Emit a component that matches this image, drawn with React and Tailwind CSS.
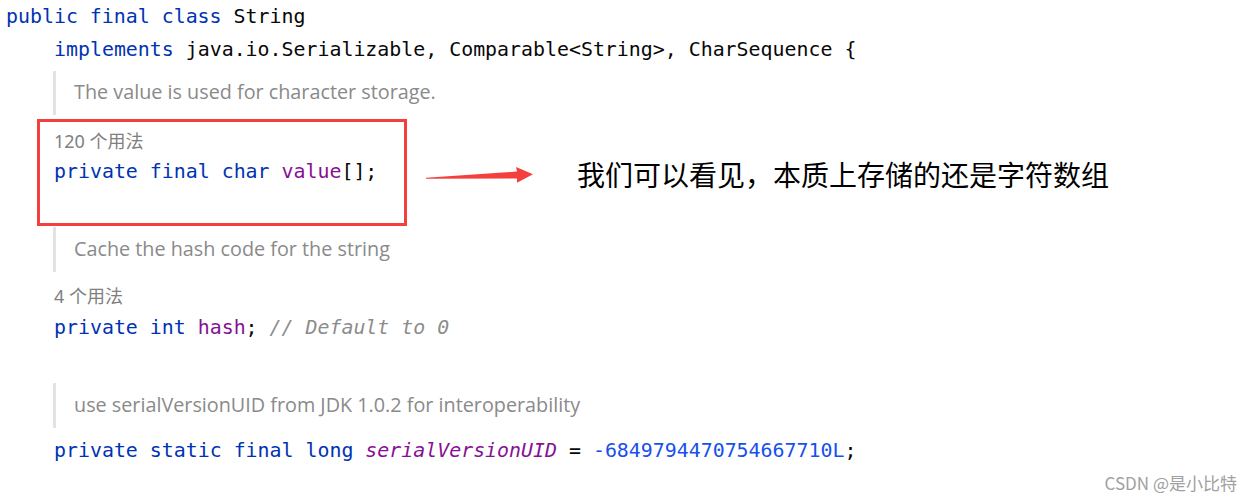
export default function App() {
    const kw = "text-[#0033b3]";
    const fld = "text-[#871094]";
    const txt = "text-[#080808]";

    return (
        <div className="relative w-[1251px] h-[502px] bg-white overflow-hidden font-['DejaVu_Sans_Mono',monospace] text-[19.9px] text-[#080808]">

            {/* CLASS HEADER */}
            <div className="h-[33px] leading-[33px] pl-[6px] whitespace-pre">
                <span className={kw}>public final class </span>
                <span className={txt}>String</span>
            </div>
            <div className="h-[33px] leading-[33px] pl-[54px] whitespace-pre">
                <span className={kw}>implements </span>
                <span className={txt}>java.io.Serializable, Comparable&lt;String&gt;, CharSequence {"{"}</span>
            </div>

            {/* DOC 1 */}
            <div className="mt-[5px] ml-[53px] h-[44px] border-l-[3px] border-[#e3e3e3] pl-[18px] pb-[2px] flex items-center font-['Open_Sans',sans-serif] text-[19.8px] text-[#8a8a8a]">
                The value is used for character storage.
            </div>

            {/* VALUE FIELD + NOTE */}
            <div className="mt-[4px] flex items-start">
                <div className="ml-[37px] w-[370px] h-[107px] border-[3px] border-[#f43f3f] pl-[14px]">
                    <div className="h-[34px] pt-[4px] leading-[30px] font-['Noto_Sans','Noto_Sans_CJK_SC',sans-serif] text-[18px] text-[#808080]">
                        120 个用法
                    </div>
                    <div className="h-[32px] leading-[32px] whitespace-pre">
                        <span className={kw}>private final char </span>
                        <span className={fld}>value</span>
                        <span className={txt}>[];</span>
                    </div>
                </div>

                <svg width="108" height="17" viewBox="0 0 108 17" className="ml-[19px] mt-[48px]">
                    <polygon
                        points="0,10.7 91,4.6 90,0 107,7.3 91,15.7 91,11.4 0,11.8"
                        fill="#f43f3f"
                    />
                </svg>

                <div className="ml-[43px] mt-[35px] leading-[40px] font-['Noto_Sans_CJK_SC',sans-serif] text-[28px] text-black">
                    我们可以看见，本质上存储的还是字符数组
                </div>
            </div>

            {/* DOC 2 */}
            <div className="mt-[1px] ml-[53px] h-[45px] border-l-[3px] border-[#e3e3e3] pl-[18px] pb-[2px] flex items-center font-['Open_Sans',sans-serif] text-[19.8px] text-[#8a8a8a]">
                Cache the hash code for the string
            </div>

            <div className="mt-[8px] h-[32px] leading-[32px] pl-[54px] font-['Noto_Sans','Noto_Sans_CJK_SC',sans-serif] text-[18px] text-[#808080]">
                4 个用法
            </div>
            <div className="h-[32px] leading-[32px] pl-[54px] whitespace-pre">
                <span className={kw}>private int </span>
                <span className={fld}>hash</span>
                <span className={txt}>; </span>
                <span className="italic text-[#8c8c8c]">// Default to 0</span>
            </div>

            {/* DOC 3 */}
            <div className="mt-[39px] ml-[53px] h-[45px] border-l-[3px] border-[#e3e3e3] pl-[18px] pb-[2px] flex items-center font-['Open_Sans',sans-serif] text-[19.8px] text-[#8a8a8a]">
                use serialVersionUID from JDK 1.0.2 for interoperability
            </div>

            <div className="mt-[7px] h-[32px] leading-[32px] pl-[54px] whitespace-pre">
                <span className={kw}>private static final long </span>
                <span className={`${fld} italic`}>serialVersionUID</span>
                <span className={txt}> = </span>
                <span className="text-[#1750eb]">-6849794470754667710L</span>
                <span className={txt}>;</span>
            </div>

            {/* WATERMARK */}
            <div className="absolute right-[14px] bottom-[8px] font-['Noto_Sans_CJK_SC',sans-serif] text-[17px] leading-[22px] text-[#a0a0a0]">
                CSDN @是小比特
            </div>
        </div>
    );
}
